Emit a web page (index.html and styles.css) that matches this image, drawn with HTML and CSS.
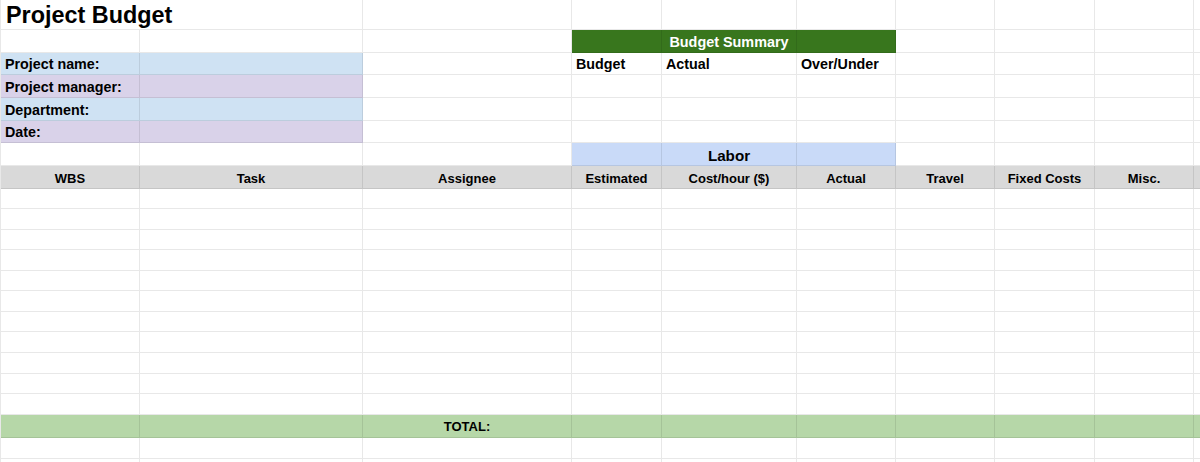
FILE: index.html
```html
<!DOCTYPE html>
<html>
<head>
<meta charset="utf-8">
<title>Project Budget</title>
<link rel="stylesheet" href="styles.css">
</head>
<body>
<div class="sheet">
  <!-- row 1 -->
  <div class="c title span2">Project Budget</div>
  <div class="c"></div><div class="c"></div><div class="c"></div><div class="c"></div><div class="c"></div><div class="c"></div><div class="c"></div><div class="c"></div>
  <!-- row 2 -->
  <div class="c"></div><div class="c"></div><div class="c"></div>
  <div class="c dkgreen"></div><div class="c dkgreen ctr summary">Budget Summary</div><div class="c dkgreen"></div>
  <div class="c"></div><div class="c"></div><div class="c"></div><div class="c"></div>
  <!-- row 3 -->
  <div class="c blue">Project name:</div><div class="c blue"></div><div class="c"></div>
  <div class="c">Budget</div><div class="c">Actual</div><div class="c">Over/Under</div>
  <div class="c"></div><div class="c"></div><div class="c"></div><div class="c"></div>
  <!-- row 4 -->
  <div class="c purple">Project manager:</div><div class="c purple"></div>
  <div class="c"></div><div class="c"></div><div class="c"></div><div class="c"></div><div class="c"></div><div class="c"></div><div class="c"></div><div class="c"></div>
  <!-- row 5 -->
  <div class="c blue">Department:</div><div class="c blue"></div>
  <div class="c"></div><div class="c"></div><div class="c"></div><div class="c"></div><div class="c"></div><div class="c"></div><div class="c"></div><div class="c"></div>
  <!-- row 6 -->
  <div class="c purple">Date:</div><div class="c purple"></div>
  <div class="c"></div><div class="c"></div><div class="c"></div><div class="c"></div><div class="c"></div><div class="c"></div><div class="c"></div><div class="c"></div>
  <!-- row 7 -->
  <div class="c"></div><div class="c"></div><div class="c"></div>
  <div class="c labor"></div><div class="c labor ctr laborText">Labor</div><div class="c labor"></div>
  <div class="c"></div><div class="c"></div><div class="c"></div><div class="c"></div>
  <!-- row 8 header -->
  <div class="c grey ctr hd">WBS</div>
  <div class="c grey ctr hd">Task</div>
  <div class="c grey ctr hd">Assignee</div>
  <div class="c grey ctr hd">Estimated</div>
  <div class="c grey ctr hd">Cost/hour ($)</div>
  <div class="c grey ctr hd">Actual</div>
  <div class="c grey ctr hd">Travel</div>
  <div class="c grey ctr hd">Fixed Costs</div>
  <div class="c grey ctr hd">Misc.</div>
  <div class="c grey"></div>
  <!-- data rows x11 -->
  <div class="c"></div><div class="c"></div><div class="c"></div><div class="c"></div><div class="c"></div><div class="c"></div><div class="c"></div><div class="c"></div><div class="c"></div><div class="c"></div>
  <div class="c"></div><div class="c"></div><div class="c"></div><div class="c"></div><div class="c"></div><div class="c"></div><div class="c"></div><div class="c"></div><div class="c"></div><div class="c"></div>
  <div class="c"></div><div class="c"></div><div class="c"></div><div class="c"></div><div class="c"></div><div class="c"></div><div class="c"></div><div class="c"></div><div class="c"></div><div class="c"></div>
  <div class="c"></div><div class="c"></div><div class="c"></div><div class="c"></div><div class="c"></div><div class="c"></div><div class="c"></div><div class="c"></div><div class="c"></div><div class="c"></div>
  <div class="c"></div><div class="c"></div><div class="c"></div><div class="c"></div><div class="c"></div><div class="c"></div><div class="c"></div><div class="c"></div><div class="c"></div><div class="c"></div>
  <div class="c"></div><div class="c"></div><div class="c"></div><div class="c"></div><div class="c"></div><div class="c"></div><div class="c"></div><div class="c"></div><div class="c"></div><div class="c"></div>
  <div class="c"></div><div class="c"></div><div class="c"></div><div class="c"></div><div class="c"></div><div class="c"></div><div class="c"></div><div class="c"></div><div class="c"></div><div class="c"></div>
  <div class="c"></div><div class="c"></div><div class="c"></div><div class="c"></div><div class="c"></div><div class="c"></div><div class="c"></div><div class="c"></div><div class="c"></div><div class="c"></div>
  <div class="c"></div><div class="c"></div><div class="c"></div><div class="c"></div><div class="c"></div><div class="c"></div><div class="c"></div><div class="c"></div><div class="c"></div><div class="c"></div>
  <div class="c"></div><div class="c"></div><div class="c"></div><div class="c"></div><div class="c"></div><div class="c"></div><div class="c"></div><div class="c"></div><div class="c"></div><div class="c"></div>
  <div class="c"></div><div class="c"></div><div class="c"></div><div class="c"></div><div class="c"></div><div class="c"></div><div class="c"></div><div class="c"></div><div class="c"></div><div class="c"></div>
  <!-- total row -->
  <div class="c total"></div><div class="c total"></div><div class="c total ctr tot">TOTAL:</div>
  <div class="c total"></div><div class="c total"></div><div class="c total"></div><div class="c total"></div><div class="c total"></div><div class="c total"></div><div class="c total"></div>
  <!-- trailing rows -->
  <div class="c"></div><div class="c"></div><div class="c"></div><div class="c"></div><div class="c"></div><div class="c"></div><div class="c"></div><div class="c"></div><div class="c"></div><div class="c"></div>
  <div class="c"></div><div class="c"></div><div class="c"></div><div class="c"></div><div class="c"></div><div class="c"></div><div class="c"></div><div class="c"></div><div class="c"></div><div class="c"></div>
</div>
</body>
</html>
```

FILE: styles.css
```css
html, body {
  margin: 0;
  padding: 0;
  background: #ffffff;
  overflow: hidden;
}

body {
  font-family: "Liberation Sans", Arial, sans-serif;
  color: #000000;
}

.sheet {
  display: grid;
  grid-template-columns: 139px 223px 209px 90px 135px 99px 99px 100px 99px 12px;
  grid-template-rows: 30px repeat(7, 22.67px) repeat(11, 20.55px) 23.4px repeat(2, 20.6px);
  border-left: 1px solid rgba(0, 0, 0, 0.09);
  width: max-content;
}

.c {
  box-sizing: border-box;
  border-right: 1px solid rgba(0, 0, 0, 0.09);
  border-bottom: 1px solid rgba(0, 0, 0, 0.09);
  display: flex;
  align-items: center;
  padding: 2px 4px 0 4px;
  font-weight: bold;
  font-size: 14.3px;
  white-space: nowrap;
  min-width: 0;
}

.span2 {
  grid-column: span 2;
}

.title {
  font-size: 23.4px;
  padding-left: 5px;
  padding-top: 2px;
}

.ctr {
  justify-content: center;
}

.dkgreen {
  background: #38761d;
}

.summary {
  color: #ffffff;
  font-size: 14.4px;
}

.blue {
  background: #cfe2f3;
}

.purple {
  background: #d9d2e9;
}

.labor {
  background: #c9daf8;
}

.laborText {
  font-size: 15.2px;
}

.grey {
  background: #d9d9d9;
}

.hd {
  font-size: 13px;
  padding-top: 3px;
}

.total {
  background: #b6d7a8;
}

.tot {
  font-size: 13px;
}
```
